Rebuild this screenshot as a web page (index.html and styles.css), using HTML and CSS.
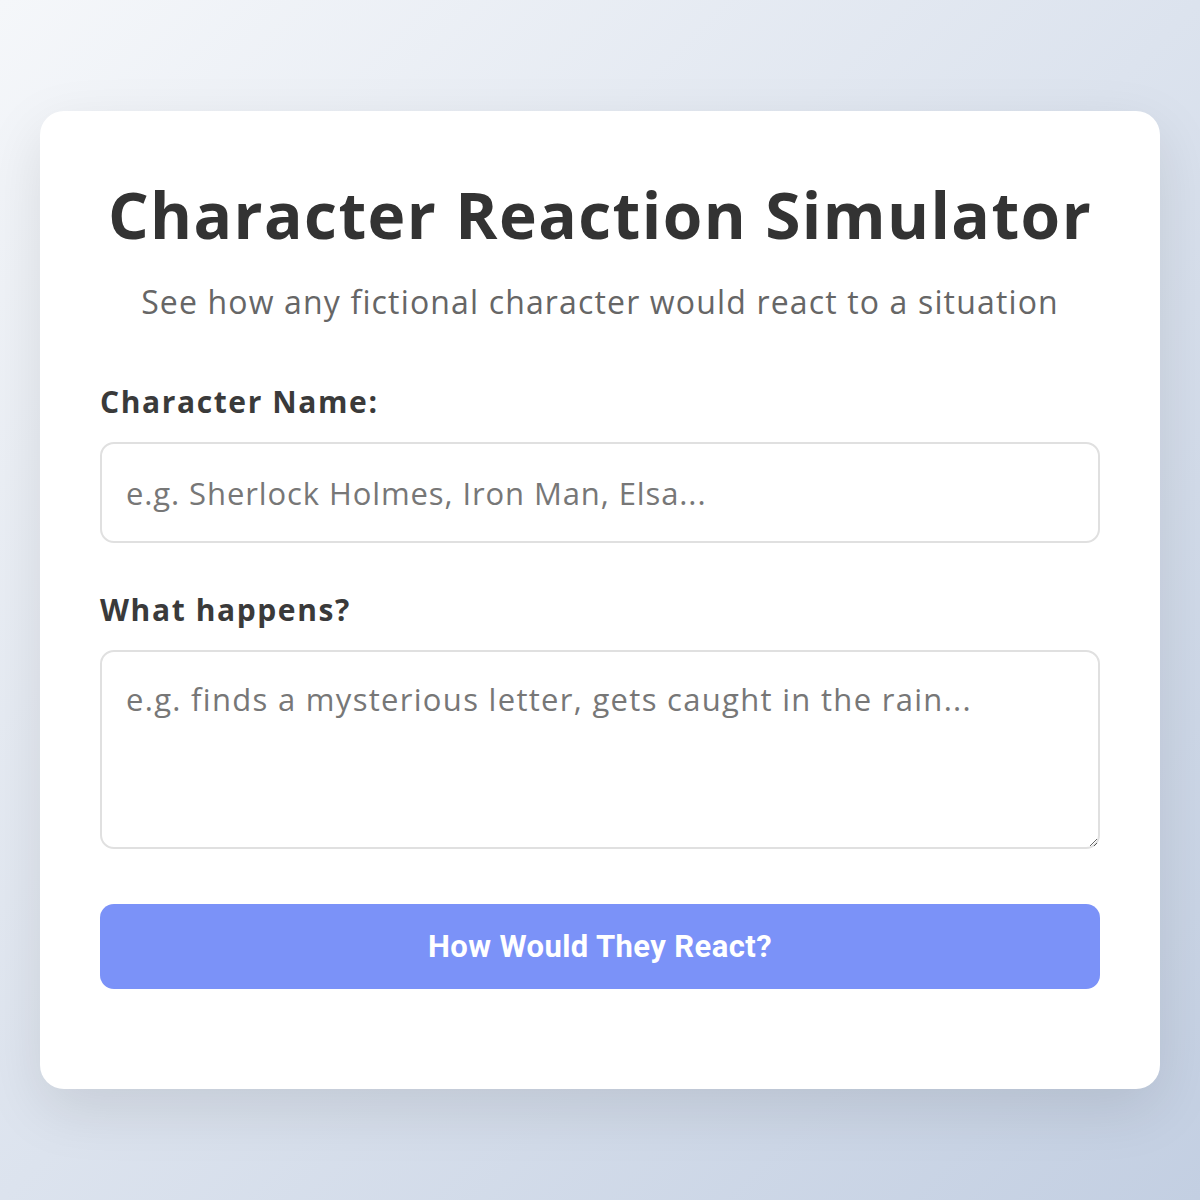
FILE: index.html
```html
<!DOCTYPE html>
<html lang="en">
<head>
    <meta charset="UTF-8">
    <meta name="viewport" content="width=device-width, initial-scale=1.0">
    <title>Character Reaction Simulator</title>
    <link rel="stylesheet" href="styles.css">
</head>
<body>
    <div class="container">
        <h1>Character Reaction Simulator</h1>
        <p class="subtitle">See how any fictional character would react to a situation</p>

        <div class="field">
            <label for="character">Character Name:</label>
            <input type="text" id="character" placeholder="e.g. Sherlock Holmes, Iron Man, Elsa...">
        </div>

        <div class="field">
            <label for="situation">What happens?</label>
            <textarea id="situation" placeholder="e.g. finds a mysterious letter, gets caught in the rain..."></textarea>
        </div>

        <button id="react">How Would They React?</button>
    </div>
</body>
</html>
```

FILE: styles.css
```css
* {
    box-sizing: border-box;
}

body {
    margin: 0;
    min-height: 100vh;
    padding: 40px;
    display: flex;
    align-items: center;
    justify-content: center;
    font-family: "Open Sans", "Noto Sans", sans-serif;
    background: linear-gradient(135deg, #f5f7fa 0%, #c3cfe2 100%);
}

.container {
    width: 100%;
    background: #fff;
    border-radius: 24px;
    padding: 66px 60px 100px;
    box-shadow: 0 20px 60px rgba(0, 0, 0, 0.1);
}

h1 {
    margin: 0;
    text-align: center;
    font-size: 64px;
    line-height: 1.2;
    font-weight: 700;
    letter-spacing: 1.4px;
    color: #333;
}

.subtitle {
    margin: 26px 0 57px;
    text-align: center;
    font-size: 32px;
    line-height: 1.4;
    letter-spacing: 1.15px;
    color: #666;
}

.field {
    margin-bottom: 46px;
}

label {
    display: block;
    margin-bottom: 20px;
    font-size: 30px;
    font-weight: 700;
    letter-spacing: 1.6px;
    color: #3a3a3a;
}

input,
textarea {
    display: block;
    width: 100%;
    padding: 24px 24px;
    font-family: inherit;
    font-size: 31px;
    letter-spacing: 0.9px;
    color: #333;
    border: 2px solid #e0e0e0;
    border-radius: 14px;
    outline: none;
}

input {
    height: 101px;
}

textarea {
    height: 199px;
    line-height: 1.5;
    letter-spacing: 1.3px;
}

input::placeholder,
textarea::placeholder {
    color: #777;
}

button {
    display: block;
    width: 100%;
    height: 85px;
    margin-top: 55px;
    font-family: Roboto, sans-serif;
    font-size: 31px;
    font-weight: 700;
    letter-spacing: 0.4px;
    color: #fff;
    background-color: #7b92f8;
    border: none;
    border-radius: 14px;
    cursor: pointer;
}

button:hover {
    background-color: #6a82f0;
}
```
